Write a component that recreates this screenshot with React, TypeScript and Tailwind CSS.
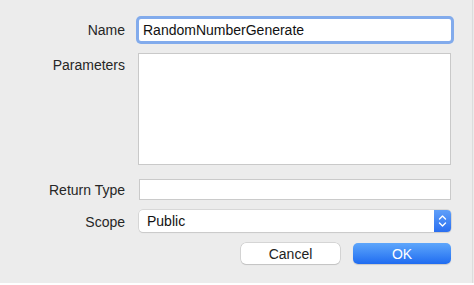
import React from "react";

export default function App() {
  const font = { fontFamily: '"Liberation Sans", Arial, sans-serif' };
  return (
    <div
      className="w-[474px] h-[285px] bg-[#ececec] text-[#262626] text-[14px] leading-[16px] relative overflow-hidden"
      style={font}
    >
      <div className="absolute right-[1px] top-0 bottom-0 w-px bg-[#dcdcdc]" />
      <div className="absolute left-0 right-0 bottom-0 h-[2px] bg-white" />
      <div className="pt-[19px] flex flex-col">
        {/* Name */}
        <div className="flex items-center h-[22px]">
          <div className="w-[125px] text-right">Name</div>
          <div className="ml-[14px] w-[312px] h-[22px] bg-white shadow-[0_0_0_3px_#82abec] rounded-[2px] flex items-center pl-[4px] text-[#111]">
            RandomNumberGenerate
          </div>
        </div>
        {/* Parameters */}
        <div className="flex items-start mt-[12px]">
          <div className="w-[125px] text-right pt-[4px]">Parameters</div>
          <div className="ml-[13px] w-[313px] h-[112px] bg-white border border-[#c9c9c9]" />
        </div>
        {/* Return Type */}
        <div className="flex items-center mt-[14px]">
          <div className="w-[125px] text-right">Return Type</div>
          <div className="ml-[14px] w-[312px] h-[21px] bg-white border border-[#cacaca]" />
        </div>
        {/* Scope */}
        <div className="flex items-center mt-[10px]">
          <div className="w-[125px] text-right pt-[2px]">Scope</div>
          <div className="ml-[14px] w-[312px] h-[22px] bg-white rounded-[4px] shadow-[0_0_0_0.5px_#c4c4c4,0_1px_1px_rgba(0,0,0,0.12)] flex items-center justify-between overflow-hidden">
            <span className="pl-[8px] text-[#111]">Public</span>
            <div className="w-[17px] h-[22px] bg-gradient-to-b from-[#5f9ff9] to-[#2a6ef0] flex items-center justify-center">
              <svg width="9" height="14" viewBox="0 0 9 14" fill="none">
                <path d="M1.5 5 L4.5 2 L7.5 5" stroke="white" strokeWidth="1.4" strokeLinecap="round" strokeLinejoin="round" />
                <path d="M1.5 9 L4.5 12 L7.5 9" stroke="white" strokeWidth="1.4" strokeLinecap="round" strokeLinejoin="round" />
              </svg>
            </div>
          </div>
        </div>
        {/* Buttons */}
        <div className="flex mt-[11px] pl-[241px] gap-[13px]">
          <div className="w-[99px] h-[21px] bg-white rounded-[5px] shadow-[0_0_0_0.5px_#bdbdbd,0_1px_1px_rgba(0,0,0,0.15)] flex items-center justify-center text-[#222]">
            Cancel
          </div>
          <div className="w-[98px] h-[21px] rounded-[5px] bg-gradient-to-b from-[#5ea6fb] to-[#1f6bf0] shadow-[0_1px_1px_rgba(0,0,0,0.15)] flex items-center justify-center text-white">
            OK
          </div>
        </div>
      </div>
    </div>
  );
}
